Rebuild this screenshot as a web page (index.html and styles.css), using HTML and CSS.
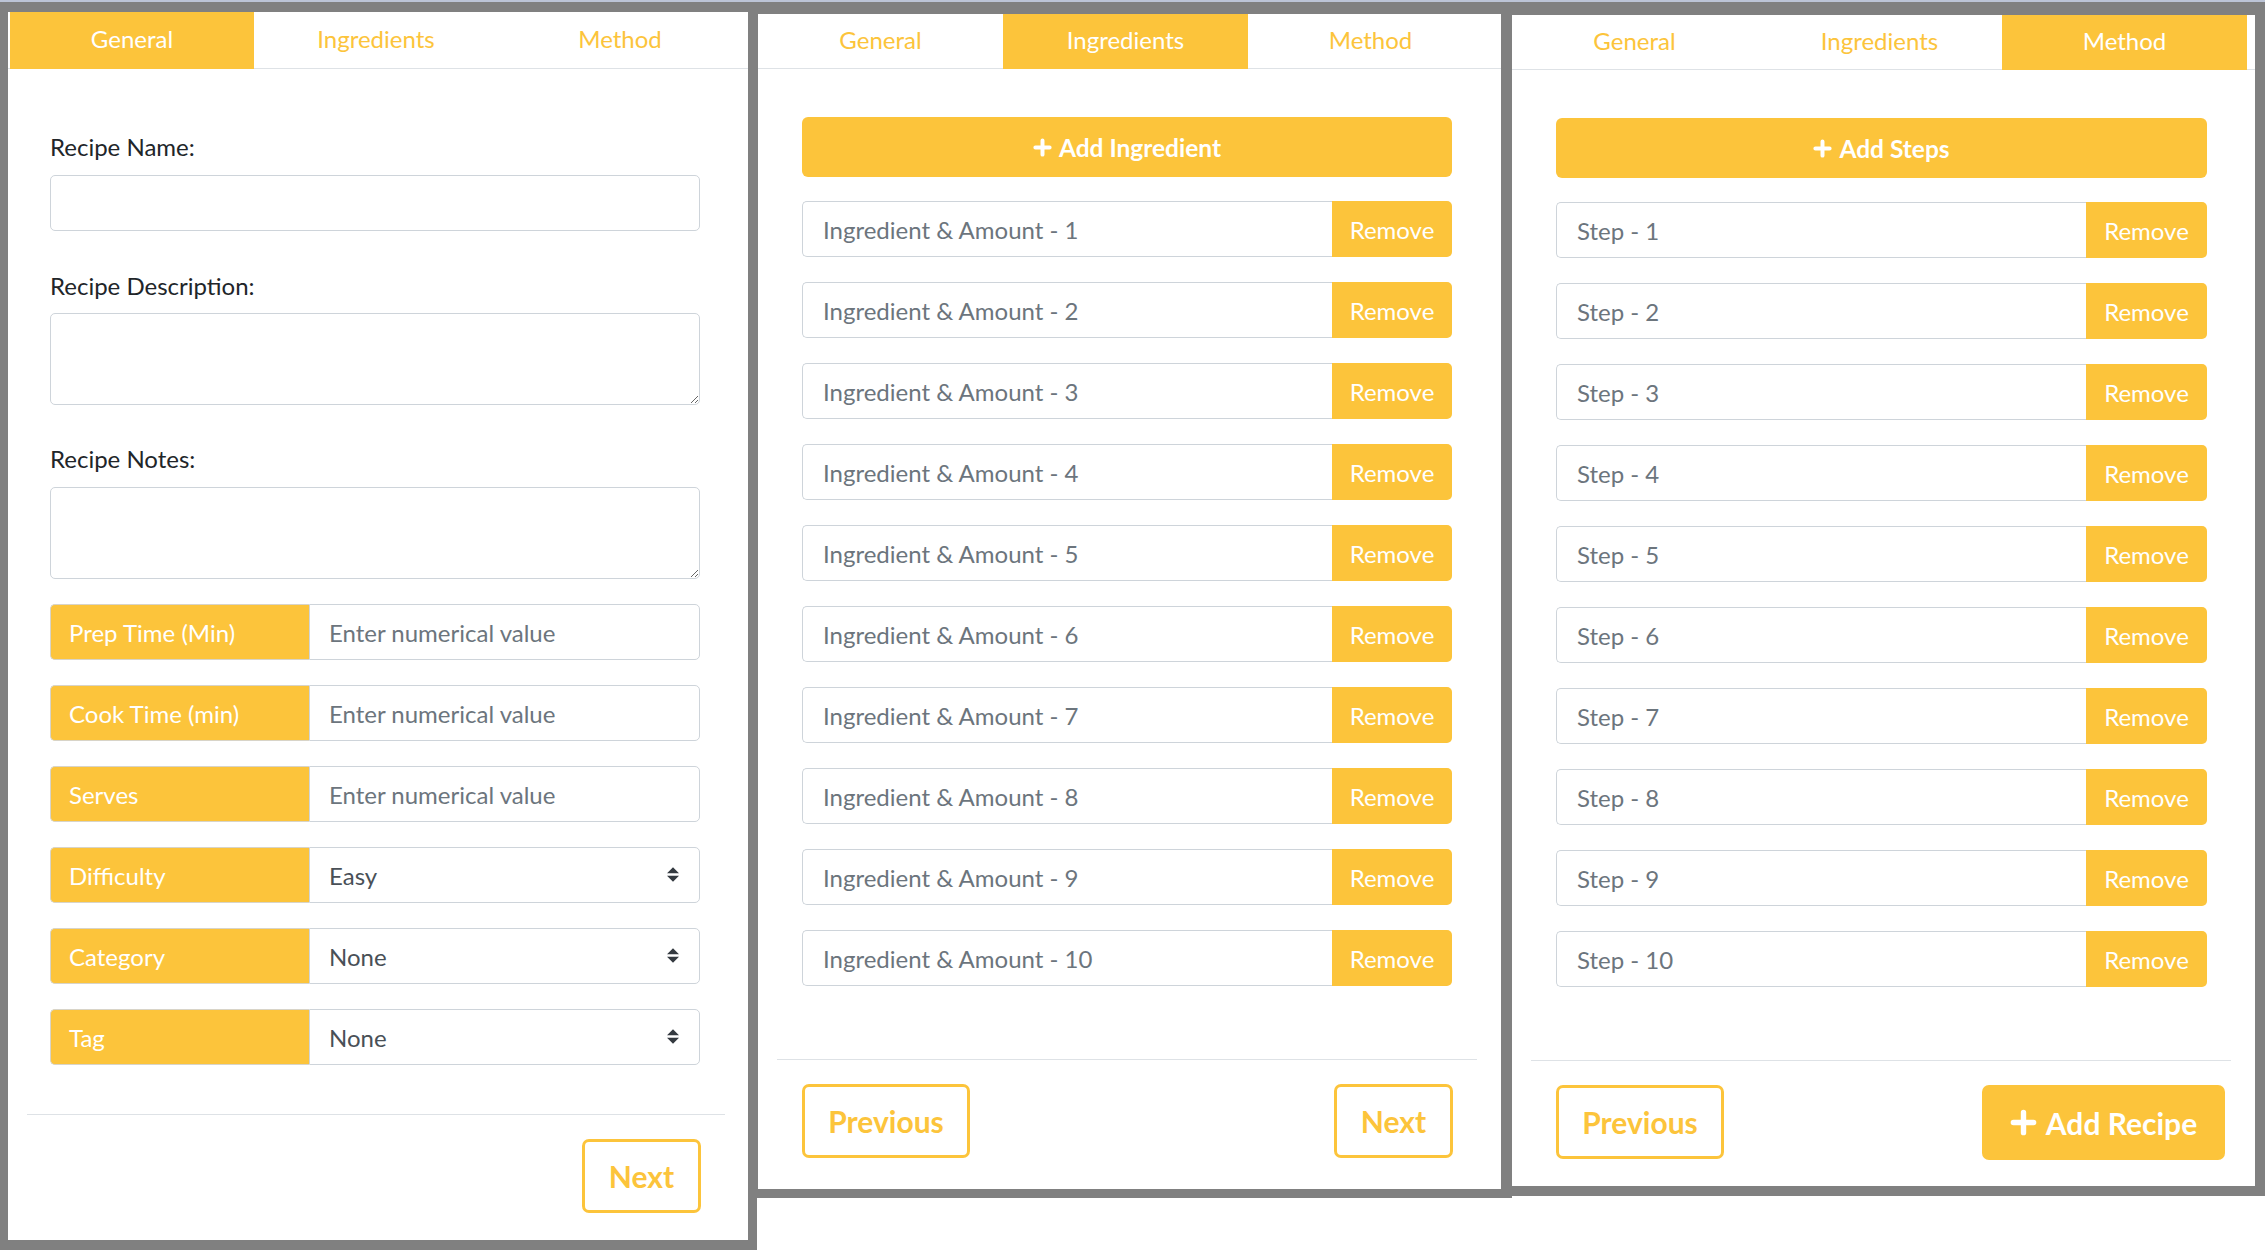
FILE: index.html
```html
<!DOCTYPE html>
<html lang="en">
<head>
<meta charset="utf-8">
<title>Add Recipe</title>
<link rel="stylesheet" href="styles.css">
</head>
<body>
<div class="topbar"></div>
<div class="stage">

  <section class="panel p1">
    <nav class="tabs">
      <div class="tab active">General</div>
      <div class="tab">Ingredients</div>
      <div class="tab">Method</div>
    </nav>
    <div class="body body-general">
      <div class="group g-name">
        <label class="label">Recipe Name:</label>
        <input class="field" type="text">
      </div>
      <div class="group g-desc">
        <label class="label tight">Recipe Description:</label>
        <textarea class="field area"></textarea>
      </div>
      <div class="group g-notes">
        <label class="label">Recipe Notes:</label>
        <textarea class="field area"></textarea>
      </div>
      <div class="igroup"><span class="ig-label">Prep Time (Min)</span><input class="ig-input" type="text" placeholder="Enter numerical value"></div>
      <div class="igroup"><span class="ig-label">Cook Time (min)</span><input class="ig-input" type="text" placeholder="Enter numerical value"></div>
      <div class="igroup"><span class="ig-label">Serves</span><input class="ig-input" type="text" placeholder="Enter numerical value"></div>
      <div class="igroup"><span class="ig-label">Difficulty</span><div class="ig-select"><span>Easy</span><svg class="caret" width="12" height="15" viewBox="0 0 12 15"><path d="M0 6.2L6 0.2L12 6.2Z M0 8.8L6 14.8L12 8.8Z" fill="#343a40"/></svg></div></div>
      <div class="igroup"><span class="ig-label">Category</span><div class="ig-select"><span>None</span><svg class="caret" width="12" height="15" viewBox="0 0 12 15"><path d="M0 6.2L6 0.2L12 6.2Z M0 8.8L6 14.8L12 8.8Z" fill="#343a40"/></svg></div></div>
      <div class="igroup"><span class="ig-label">Tag</span><div class="ig-select"><span>None</span><svg class="caret" width="12" height="15" viewBox="0 0 12 15"><path d="M0 6.2L6 0.2L12 6.2Z M0 8.8L6 14.8L12 8.8Z" fill="#343a40"/></svg></div></div>
    </div>
    <div class="footer f1">
      <button class="btn-outline btn-next">Next</button>
    </div>
  </section>

  <section class="panel p2">
    <nav class="tabs">
      <div class="tab">General</div>
      <div class="tab active">Ingredients</div>
      <div class="tab">Method</div>
    </nav>
    <div class="body body-list">
      <button class="btn-add"><svg width="19" height="19" viewBox="0 0 20 20"><path d="M10 2.5V17.5M2.5 10H17.5" stroke="#fff" stroke-width="4.2" stroke-linecap="round"/></svg><span>Add Ingredient</span></button>
      <div class="row"><input type="text" placeholder="Ingredient &amp; Amount - 1"><button class="remove">Remove</button></div>
      <div class="row"><input type="text" placeholder="Ingredient &amp; Amount - 2"><button class="remove">Remove</button></div>
      <div class="row"><input type="text" placeholder="Ingredient &amp; Amount - 3"><button class="remove">Remove</button></div>
      <div class="row"><input type="text" placeholder="Ingredient &amp; Amount - 4"><button class="remove">Remove</button></div>
      <div class="row"><input type="text" placeholder="Ingredient &amp; Amount - 5"><button class="remove">Remove</button></div>
      <div class="row"><input type="text" placeholder="Ingredient &amp; Amount - 6"><button class="remove">Remove</button></div>
      <div class="row"><input type="text" placeholder="Ingredient &amp; Amount - 7"><button class="remove">Remove</button></div>
      <div class="row"><input type="text" placeholder="Ingredient &amp; Amount - 8"><button class="remove">Remove</button></div>
      <div class="row"><input type="text" placeholder="Ingredient &amp; Amount - 9"><button class="remove">Remove</button></div>
      <div class="row"><input type="text" placeholder="Ingredient &amp; Amount - 10"><button class="remove">Remove</button></div>
    </div>
    <div class="footer f2">
      <button class="btn-outline btn-prev">Previous</button>
      <button class="btn-outline btn-next">Next</button>
    </div>
  </section>

  <section class="panel p3">
    <nav class="tabs">
      <div class="tab">General</div>
      <div class="tab">Ingredients</div>
      <div class="tab active">Method</div>
    </nav>
    <div class="body body-list">
      <button class="btn-add wide"><svg width="19" height="19" viewBox="0 0 20 20"><path d="M10 2.5V17.5M2.5 10H17.5" stroke="#fff" stroke-width="4.2" stroke-linecap="round"/></svg><span>Add Steps</span></button>
      <div class="row wide"><input type="text" placeholder="Step - 1"><button class="remove">Remove</button></div>
      <div class="row wide"><input type="text" placeholder="Step - 2"><button class="remove">Remove</button></div>
      <div class="row wide"><input type="text" placeholder="Step - 3"><button class="remove">Remove</button></div>
      <div class="row wide"><input type="text" placeholder="Step - 4"><button class="remove">Remove</button></div>
      <div class="row wide"><input type="text" placeholder="Step - 5"><button class="remove">Remove</button></div>
      <div class="row wide"><input type="text" placeholder="Step - 6"><button class="remove">Remove</button></div>
      <div class="row wide"><input type="text" placeholder="Step - 7"><button class="remove">Remove</button></div>
      <div class="row wide"><input type="text" placeholder="Step - 8"><button class="remove">Remove</button></div>
      <div class="row wide"><input type="text" placeholder="Step - 9"><button class="remove">Remove</button></div>
      <div class="row wide"><input type="text" placeholder="Step - 10"><button class="remove">Remove</button></div>
    </div>
    <div class="footer f3">
      <button class="btn-outline btn-prev">Previous</button>
      <button class="btn-solid"><svg width="27" height="27" viewBox="0 0 20 20"><path d="M10 2.5V17.5M2.5 10H17.5" stroke="#fff" stroke-width="4" stroke-linecap="round"/></svg><span>Add Recipe</span></button>
    </div>
  </section>

</div>
</body>
</html>
```

FILE: styles.css
```css
* { box-sizing: border-box; }
html, body { margin: 0; padding: 0; }
body {
  width: 2265px;
  height: 1250px;
  overflow: hidden;
  background: #ffffff;
  font-family: Lato, "Open Sans", sans-serif;
  font-size: 24px;
  color: #212529;
}
.topbar { height: 2px; background: #bcc4d6; }
.stage { display: flex; align-items: flex-start; }

.panel {
  background: #ffffff;
  border: 0 solid #808080;
  display: flex;
  flex-direction: column;
}
.p1 { width: 757px; height: 1248px; border-width: 10px 9px 10px 8px; }
.p2 { width: 755px; height: 1196px; border-width: 12px 11px 9px 1px; }
.p3 { width: 753px; height: 1194px; border-width: 13px 10px 10px 0; }

/* tabs */
.tabs {
  display: flex;
  height: 55px;
  box-shadow: inset 0 -1px 0 #dee2e6;
  flex: 0 0 auto;
}
.p1 .tabs { height: 57px; padding-left: 2px; }
.tab {
  flex: 0 0 245px;
  display: flex;
  align-items: center;
  justify-content: center;
  color: #fcc43b;
  padding-bottom: 4px;
}
.p1 .tab { flex-basis: 244px; }
.tab.active { background: #fcc43b; color: #ffffff; }

/* body */
.body { padding-left: 44px; }
.body-general { padding-left: 42px; padding-top: 60px; }
.body-list { padding-top: 48px; }

.group { width: 650px; }
.g-name { margin-bottom: 37px; }
.g-desc { margin-bottom: 36px; }
.g-notes { margin-bottom: 25px; }
.label {
  display: block;
  height: 34px;
  line-height: 34px;
  margin-bottom: 12px;
  padding-top: 1px;
}
.label.tight { margin-bottom: 11px; }
.field {
  display: block;
  width: 650px;
  height: 56px;
  margin: 0;
  border: 1px solid #ced4da;
  border-radius: 5px;
  background: #fff;
  font: inherit;
  padding: 0 20px;
  outline: none;
}
.field.area { height: 92px; resize: vertical; padding-top: 8px; }

.igroup {
  display: flex;
  width: 650px;
  height: 56px;
  margin-bottom: 25px;
}
.igroup:last-child { margin-bottom: 0; }
.ig-label {
  flex: 0 0 259px;
  display: flex;
  align-items: center;
  padding-left: 18px;
  background: #fcc43b;
  color: #ffffff;
  border: 1px solid #d8d4c8;
  border-right: none;
  border-radius: 5px 0 0 5px;
}
.ig-input, .ig-select {
  flex: 1 1 auto;
  min-width: 0;
  height: 56px;
  margin: 0;
  border: 1px solid #ced4da;
  border-radius: 0 5px 5px 0;
  background: #fff;
  font: inherit;
  color: #495057;
  padding: 0 20px 0 19px;
  outline: none;
}
.ig-select {
  display: flex;
  align-items: center;
  justify-content: space-between;
}
.caret { display: block; margin-top: -2px; }
input::placeholder { color: #6c757d; opacity: 1; }

/* list panels */
.btn-add {
  display: flex;
  align-items: center;
  justify-content: center;
  gap: 7px;
  width: 650px;
  height: 60px;
  margin: 0 0 24px 0;
  border: none;
  border-radius: 6px;
  background: #fcc43b;
  color: #ffffff;
  font: inherit;
  font-weight: 700;
  font-size: 24.5px;
  padding: 0;
}
.btn-add.wide { width: 651px; }
.btn-add svg { display: block; margin-top: 1px; }
.row {
  display: flex;
  width: 650px;
  height: 56px;
  margin-bottom: 25px;
}
.row.wide { width: 651px; }
.row:last-child { margin-bottom: 0; }
.row input {
  flex: 1 1 auto;
  min-width: 0;
  height: 56px;
  margin: 0;
  border: 1px solid #ced4da;
  border-right: none;
  border-radius: 5px 0 0 5px;
  background: #fff;
  font: inherit;
  color: #495057;
  padding: 0 20px;
  outline: none;
}
.remove {
  flex: 0 0 120px;
  height: 56px;
  margin: 0;
  border: none;
  border-radius: 0 5px 5px 0;
  background: #fcc43b;
  color: #ffffff;
  font: inherit;
  padding: 0;
}
.row.wide .remove { flex-basis: 121px; }

/* footer */
.footer {
  display: flex;
  justify-content: space-between;
  border-top: 1px solid #dee2e6;
  padding: 24px 24px 0 25px;
  flex: 0 0 auto;
}
.f1 { margin: 49px 23px 0 19px; justify-content: flex-end; }
.f2 { margin: 73px 24px 0 19px; }
.f3 { margin: 73px 24px 0 19px; }

.btn-outline {
  height: 74px;
  margin: 0;
  border: 3px solid #fcc43b;
  border-radius: 7px;
  background: #ffffff;
  color: #fcc43b;
  font: inherit;
  font-weight: 700;
  font-size: 30px;
  padding: 0;
}
.btn-prev { width: 168px; }
.btn-next { width: 119px; }
.btn-solid {
  display: flex;
  align-items: center;
  justify-content: center;
  gap: 9px;
  width: 243px;
  height: 75px;
  margin: 0 -18px 0 0;
  border: none;
  border-radius: 7px;
  background: #fcc43b;
  color: #ffffff;
  font: inherit;
  font-weight: 700;
  font-size: 30px;
  padding: 0;
}
.btn-solid svg { display: block; }
```
